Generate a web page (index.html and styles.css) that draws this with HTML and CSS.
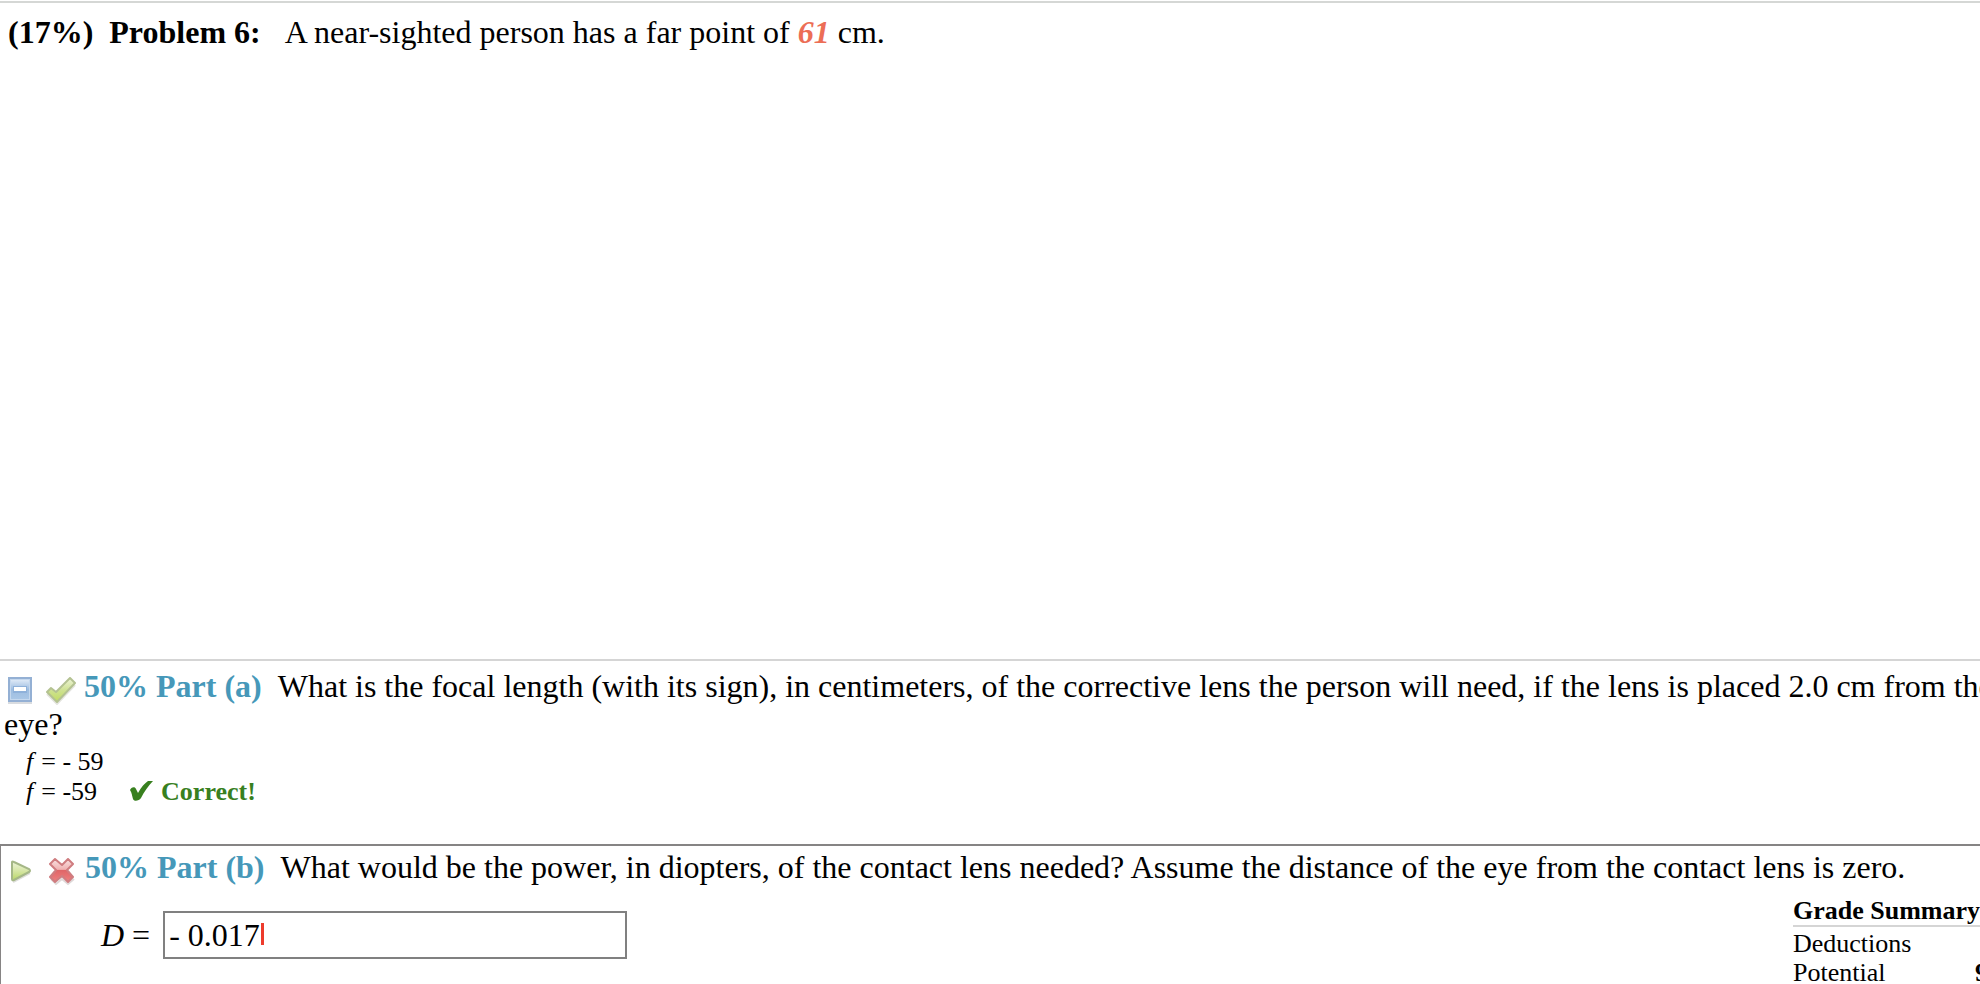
FILE: index.html
```html
<!DOCTYPE html>
<html lang="en">
<head>
<meta charset="utf-8">
<title>Problem 6</title>
<link rel="stylesheet" href="styles.css">
</head>
<body>
<main class="page">
  <section class="problem">
    <h1 class="statement"><b class="weight">(17%)</b><b class="name">Problem 6:</b><span>A near-sighted person has a far point of <b class="variable">61</b> cm.</span></h1>
  </section>

  <section class="part">
    <h2 class="question"><svg class="icon icon-toggle" viewBox="0 0 26 28" role="img" aria-label="Collapse">
        <defs><linearGradient id="blue" x1="0" y1="0" x2="0" y2="1"><stop offset="0" stop-color="#dce8f6"/><stop offset=".5" stop-color="#9dbde1"/><stop offset="1" stop-color="#a9c6e6"/></linearGradient></defs>
        <path d="M0 26h24" stroke="#d9dce0" stroke-width="2"/>
        <rect x="1" y="1" width="22" height="23" fill="#c5d8ee" stroke="#94b0d4" stroke-width="2"/>
        <rect x="3" y="3" width="18" height="19" fill="url(#blue)"/>
        <rect x="5" y="9" width="14" height="7" fill="#8fb1da"/>
        <rect x="6" y="10" width="12" height="4" fill="#fff"/>
      </svg><svg class="icon icon-status" viewBox="0 0 30 28" role="img" aria-label="Correct">
        <defs><linearGradient id="tick" x1="0" y1="0" x2="0" y2="1"><stop offset="0" stop-color="#eef4d9"/><stop offset=".5" stop-color="#cfe293"/><stop offset="1" stop-color="#c0dc60"/></linearGradient></defs>
        <path d="M1 17 11 27 29 8" fill="none" stroke="#e4e4df" stroke-width="2"/>
        <path d="M1 15 5 11 10 15 24 1 29 6 11 25Z" fill="url(#tick)" stroke="#b4c292" stroke-width="2" stroke-linejoin="round"/>
      </svg><b class="label">50% Part (a)</b><span>What is the focal length (with its sign), in centimeters, of the corrective lens the person will need, if the lens is placed 2.0 cm from the<br>eye?</span></h2>
    <div class="answers">
      <p><i>f</i>= - 59</p>
      <p><i>f</i>= -59<span class="correct"><svg class="check" viewBox="0 0 23 20" aria-hidden="true"><path d="M0 9C1 6 5 5 6 8L8 12C11 6 15 2 18 0H23C18 5 14 11 11 17 9 20 4 21 3 18 2 15 2 12 0 9Z" fill="#38801f"/></svg>Correct!</span></p>
    </div>
  </section>

  <section class="part part-active">
    <h2 class="question"><svg class="icon icon-toggle" viewBox="0 0 26 28" role="img" aria-label="Current part">
        <defs><linearGradient id="play" x1="0" y1="0" x2="0" y2="1"><stop offset="0" stop-color="#edf4d9"/><stop offset=".5" stop-color="#d6e6a5"/><stop offset="1" stop-color="#b8d766"/></linearGradient></defs>
        <path d="M4 24 21 15" stroke="#dededb" stroke-width="2"/>
        <path d="M3 4Q3 3 5 4L20 11Q22 13 20 14L5 22Q3 23 3 21Z" fill="url(#play)" stroke="#a5b787" stroke-width="2"/>
      </svg><svg class="icon icon-status" viewBox="0 0 30 28" role="img" aria-label="Incorrect">
        <defs><linearGradient id="cross" x1="0" y1="0" x2="0" y2="1"><stop offset="0" stop-color="#f9e2e2"/><stop offset=".45" stop-color="#f0b2b2"/><stop offset=".5" stop-color="#e06668"/><stop offset="1" stop-color="#ee8080"/></linearGradient></defs>
        <path d="M4 21 9 26 15 21 21 26 27 21" fill="none" stroke="#dfd9d9" stroke-width="2"/>
        <path d="M8 1 15 7 21 1 26 6 20 12 26 19 21 24 15 18 8 24 3 19 9 12 3 6Z" fill="url(#cross)" stroke="#cf7d80" stroke-width="2" stroke-linejoin="round"/>
      </svg><b class="label">50% Part (b)</b><span>What would be the power, in diopters, of the contact lens needed? Assume the distance of the eye from the contact lens is zero.</span></h2>
    <div class="work">
      <div class="entry">
        <label for="power"><i>D</i> =</label>
        <div class="field"><input id="power" type="text" value="- 0.017"><span class="caret"></span></div>
      </div>
      <table class="grades">
        <thead><tr><th colspan="2" scope="colgroup">Grade Summary</th></tr></thead>
        <tbody>
          <tr><td class="item">Deductions</td><td></td></tr>
          <tr><td class="item">Potential</td><td><b>9</b></td></tr>
        </tbody>
      </table>
    </div>
  </section>
</main>
</body>
</html>
```
FILE: styles.css
```css
* { box-sizing: border-box; }
body {
  margin: 0;
  background: #fff;
  color: #000;
  font-family: "Liberation Serif", "Times New Roman", serif;
  font-size: 32px;
  line-height: 38px;
  overflow: hidden;
}
.page {
  display: flex;
  flex-direction: column;
  height: 100vh;
  padding-top: 1px;
  white-space: nowrap;
}
h1, h2, p { margin: 0; font-size: inherit; font-weight: normal; }

.problem {
  flex: 1;
  border-top: 2px solid #d5d7d5;
  padding: 10px 8px;
}
.weight { margin-right: 16px; }
.name { margin-right: 24px; }
.variable { color: #ec6e56; font-style: italic; }

.part {
  height: 185px;
  border-top: 2px solid #d5d5d5;
  padding: 6px 4px;
}
.part-active {
  height: 140px;
  border-top-color: #868484;
  border-left: 1px solid #868484;
  padding-top: 2px;
  padding-bottom: 0;
}
.icon { height: 28px; vertical-align: -8px; }
.icon-toggle { width: 26px; margin: 0 12px 0 4px; }
.icon-status { width: 30px; margin-right: 8px; }
.label { color: #4698b9; margin-right: 16px; }

.answers {
  padding: 4px 22px;
  font-size: 26px;
  line-height: 30px;
}
.answers i { margin-right: 8px; }
.correct { color: #38801f; font-weight: bold; margin-left: 33px; }
.check { width: 23px; height: 20px; margin-right: 8px; vertical-align: -1px; }

.work {
  display: flex;
  justify-content: space-between;
  align-items: flex-start;
}
.entry {
  display: flex;
  align-items: center;
  gap: 13px;
  padding: 25px 0 0 96px;
}
.field { position: relative; }
.field input {
  display: block;
  width: 464px;
  height: 48px;
  border: 2px solid #808080;
  padding: 0 4px;
  background: #fff;
  color: #000;
  font: inherit;
  outline: 0;
}
.caret {
  position: absolute;
  left: 98px;
  top: 12px;
  width: 3px;
  height: 22px;
  background: #ed3b2c;
}
.grades {
  border-collapse: collapse;
  width: 224px;
  flex: none;
  margin: 10px -41px 0 0;
  font-size: 26px;
  line-height: 29px;
}
.grades th {
  border-bottom: 2px solid #d5d5d5;
  padding: 0;
  text-align: left;
}
.grades td { padding: 0; }
.grades tbody tr:first-child td { padding-top: 2px; }
.grades .item { width: 182px; }
```
